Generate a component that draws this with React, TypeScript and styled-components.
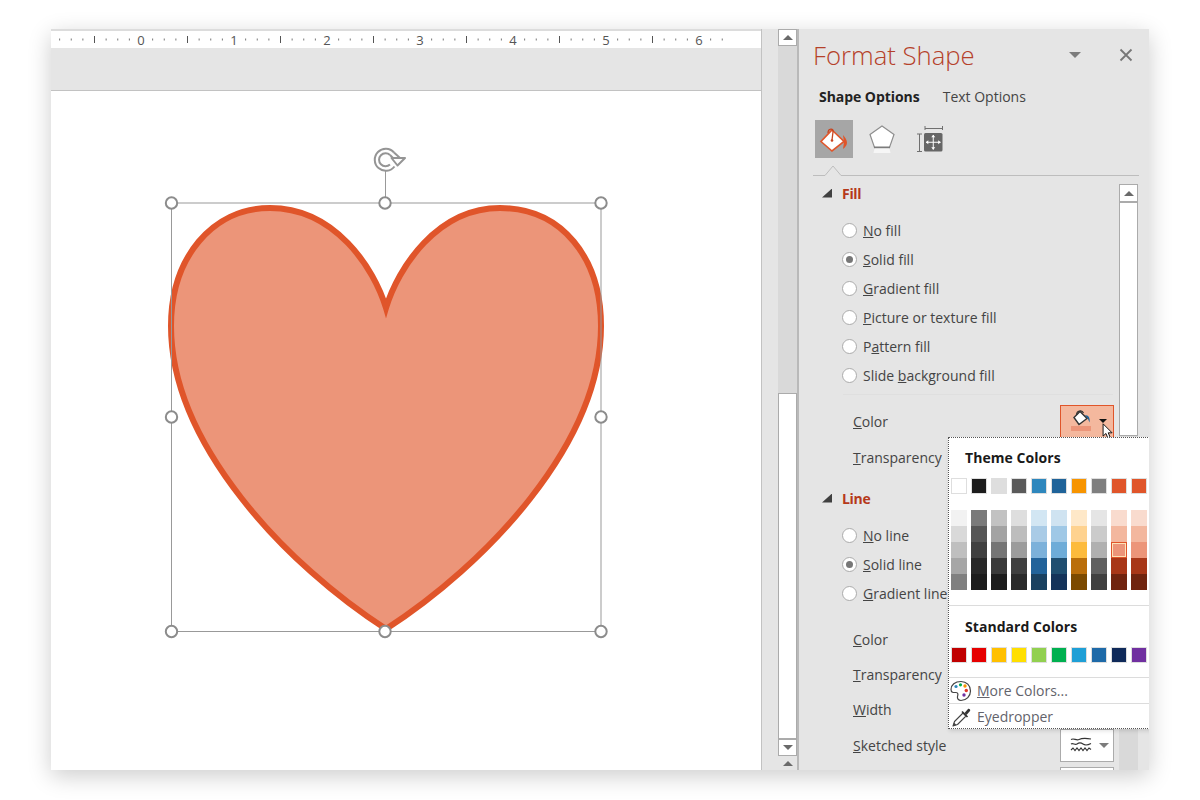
import * as React from "react";
import styled, { createGlobalStyle } from "styled-components";

const FONT = `"Open Sans", "Noto Sans", "Liberation Sans", sans-serif`;

const GlobalStyle = createGlobalStyle`
  html, body {
    margin: 0;
    padding: 0;
    background: #ffffff;
    font-family: ${FONT};
  }
`;

const Page = styled.div`
  width: 1200px;
  height: 800px;
  padding: 29px 51px 0;
  box-sizing: border-box;
  overflow: hidden;
`;

const Window = styled.div`
  position: relative;
  display: flex;
  width: 1098px;
  height: 741px;
  overflow: hidden;
  background: #e5e5e5;
  box-shadow: 0 6px 22px rgba(0, 0, 0, 0.2);
`;

const Editor = styled.div`
  display: flex;
  flex-direction: column;
  width: 710px;
`;

const Ruler = styled.svg`
  display: block;
  flex: none;
  width: 710px;
  height: 19px;
`;

const Band = styled.div`
  flex: none;
  height: 42px;
  background: #e5e5e5;
  border-bottom: 1px solid #c2c2c2;
`;

const Slide = styled.div`
  flex: 1;
  background: #ffffff;
`;

const Canvas = styled.svg`
  display: block;
  width: 710px;
  height: 679px;
`;

const Gutter = styled.div`
  flex: none;
  width: 16px;
  background: #e5e5e5;
  border-left: 1px solid #c2c2c2;
`;

const MainScroll = styled.div`
  flex: none;
  display: flex;
  flex-direction: column;
  width: 19px;
  background: #d9d9d9;
`;

const ScrollButton = styled.div`
  flex: none;
  display: flex;
  align-items: center;
  justify-content: center;
  box-sizing: border-box;
  width: 19px;
  height: ${p => p.$h || 18}px;
  background: #ffffff;
  border: 1px solid #ababab;
`;

const Up = styled.div`
  width: 0;
  height: 0;
  border-left: 5px solid transparent;
  border-right: 5px solid transparent;
  border-bottom: 5px solid #6a6a6a;
`;

const Down = styled.div`
  width: 0;
  height: 0;
  border-left: ${p => p.$s || 5}px solid transparent;
  border-right: ${p => p.$s || 5}px solid transparent;
  border-top: ${p => p.$s || 5}px solid ${p => p.$c || "#6a6a6a"};
`;

const TrackGap = styled.div`
  flex: none;
  height: ${p => p.$h}px;
`;

const Thumb = styled.div`
  flex: none;
  box-sizing: border-box;
  height: 346px;
  background: #ffffff;
  border: 1px solid #ababab;
`;

const PrevSlide = styled.div`
  flex: 1;
  display: flex;
  justify-content: center;
  padding-top: 5px;
  background: #e5e5e5;
`;

const Splitter = styled.div`
  flex: none;
  width: 2px;
  background: #b9b9b9;
`;

const Panel = styled.div`
  flex: 1;
  display: flex;
  flex-direction: column;
  min-width: 0;
  background: #e5e5e5;
`;

const PanelHeader = styled.div`
  flex: none;
  display: flex;
  align-items: center;
  box-sizing: border-box;
  height: 54px;
  padding: 0 0 2px 14px;
`;

const Title = styled.div`
  flex: 1;
  font-size: 25.7px;
  font-weight: 300;
  color: #b5412a;
  white-space: nowrap;
`;

const HeaderDrop = styled.div`
  width: 0;
  height: 0;
  margin-right: 38px;
  border-left: 6px solid transparent;
  border-right: 6px solid transparent;
  border-top: 6px solid #7c7c7c;
`;

const CloseIcon = styled.svg`
  width: 14px;
  height: 14px;
  margin-right: 16px;
`;

const Tabs = styled.div`
  flex: none;
  display: flex;
  gap: 23px;
  height: 24px;
  margin-top: 1px;
  padding-left: 20px;
  align-items: center;
`;

const Tab = styled.div`
  font-size: 14px;
  font-weight: ${p => (p.$active ? 700 : 400)};
  color: ${p => (p.$active ? "#222222" : "#444444")};
  white-space: nowrap;
  letter-spacing: ${p => (p.$active ? "-0.05px" : "0")};
`;

const IconRow = styled.div`
  flex: none;
  display: flex;
  margin-top: 12px;
  padding-left: 16px;
  gap: 10px;
`;

const IconTile = styled.div`
  width: 38px;
  height: 38px;
  background: ${p => (p.$active ? "#a6a6a6" : "transparent")};
`;

const TileIcon = styled.svg`
  display: block;
  width: 38px;
  height: 38px;
`;

const DividerIcon = styled.svg`
  display: block;
  flex: none;
  width: 350px;
  height: 18px;
`;

const PanelBody = styled.div`
  flex: 1;
  display: flex;
  min-height: 0;
  padding-left: 14px;
`;

const Content = styled.div`
  flex: none;
  width: 306px;
  padding-top: 7px;
`;

const PanelScroll = styled.div`
  flex: none;
  display: flex;
  flex-direction: column;
  width: 19px;
  margin-top: 8px;
  background: #d9d9d9;
`;

const PanelThumb = styled.div`
  flex: none;
  box-sizing: border-box;
  height: 234px;
  background: #ffffff;
  border: 1px solid #ababab;
`;

const SectionHead = styled.div`
  display: flex;
  align-items: center;
  height: 20px;
  padding-left: 9px;
  margin-top: ${p => p.$mt || 0}px;
`;

const Twisty = styled.div`
  width: 10px;
  height: 9px;
  margin-right: 10px;
  background: #404040;
  clip-path: polygon(100% 0, 100% 100%, 0 100%);
`;

const SectionTitle = styled.div`
  font-size: 14px;
  font-weight: 700;
  letter-spacing: -0.3px;
  color: #b5391a;
`;

const RadioList = styled.div`
  margin-top: ${p => p.$mt}px;
`;

const RadioRow = styled.div`
  display: flex;
  align-items: center;
  height: 29px;
  padding-left: 29px;
  font-size: 14px;
  color: #444444;
  white-space: nowrap;
`;

const RadioDot = styled.div`
  display: flex;
  align-items: center;
  justify-content: center;
  flex: none;
  box-sizing: border-box;
  width: 15px;
  height: 15px;
  margin-right: 6px;
  border-radius: 50%;
  background: #ffffff;
  border: 1px solid #ababab;
`;

const RadioMark = styled.div`
  width: 7px;
  height: 7px;
  border-radius: 50%;
  background: #777777;
`;

const Hairline = styled.div`
  height: 1px;
  margin: 4px 6px 0 30px;
  background: #dfdfdf;
`;

const PropRow = styled.div`
  display: flex;
  align-items: center;
  justify-content: space-between;
  height: ${p => p.$h || 36}px;
  margin-top: ${p => p.$mt || 0}px;
  padding: 0 5px 0 40px;
  font-size: 14px;
  color: #444444;
  white-space: nowrap;
`;

const ColorButton = styled.div`
  position: relative;
  display: flex;
  align-items: center;
  box-sizing: border-box;
  width: 54px;
  height: 33px;
  padding-left: 8px;
  gap: 6px;
  background: #f4b89e;
  border: 1px solid #e0552a;
`;

const StyleButton = styled.div`
  display: flex;
  align-items: center;
  box-sizing: border-box;
  width: 54px;
  height: 33px;
  padding-left: 9px;
  gap: 7px;
  background: #ffffff;
  border: 1px solid #ababab;
`;

const EmptyBox = styled.div`
  box-sizing: border-box;
  width: 54px;
  height: 10px;
  margin: 4px 0 0 247px;
  background: #ffffff;
  border: 1px solid #ababab;
`;

const Cursor = styled.svg`
  position: absolute;
  right: -1px;
  bottom: -4px;
  width: 12px;
  height: 18px;
`;

const Menu = styled.div`
  position: absolute;
  left: 897px;
  top: 408px;
  box-sizing: border-box;
  width: 204px;
  height: 292px;
  background: #ffffff;
  border: 1px dotted #555555;
  box-shadow: 1px 2px 4px rgba(0, 0, 0, 0.12);
`;

const MenuHeading = styled.div`
  display: flex;
  align-items: center;
  height: 20px;
  margin-top: ${p => p.$mt}px;
  padding-left: 16px;
  font-size: 14px;
  font-weight: 700;
  letter-spacing: 0.05px;
  color: #1a1a1a;
`;

const SwatchRow = styled.div`
  display: flex;
  gap: 4px;
  margin-top: ${p => p.$mt}px;
  padding-left: 2px;
`;

const Swatch = styled.div`
  flex: none;
  box-sizing: border-box;
  width: 16px;
  height: 16px;
  background: ${p => p.$c};
  border: 1px solid #dedede;
`;

const TintColumn = styled.div`
  flex: none;
  width: 16px;
  outline: 1px solid #dedede;
  outline-offset: -1px;
`;

const Tint = styled.div`
  position: relative;
  height: 16px;
  background: ${p => p.$c};
`;

const TintPick = styled.div`
  position: absolute;
  inset: 0;
  border: 1px solid #e0552a;
  box-shadow: inset 0 0 0 1px #fde3b8;
`;

const MenuRule = styled.div`
  height: 1px;
  margin-top: ${p => p.$mt || 0}px;
  background: #dcdcdc;
`;

const MenuItem = styled.div`
  display: flex;
  align-items: center;
  height: ${p => p.$h}px;
  padding-left: 1px;
  font-size: 14px;
  color: #63636b;
  white-space: nowrap;
`;

const MenuIcon = styled.svg`
  flex: none;
  width: 22px;
  height: 22px;
  margin-right: 5px;
`;

const SmallIcon = styled.svg`
  flex: none;
`;

const THEME = [
  "#ffffff", "#1c1c1c", "#dedede", "#5a5a5a", "#2e87bd",
  "#1f6399", "#f79400", "#7f7f7f", "#e0552a", "#e0552a"
];

const TINTS = [
  ["#f2f2f2", "#d9d9d9", "#bfbfbf", "#a6a6a6", "#808080"],
  ["#7a7a7a", "#565656", "#404040", "#282828", "#1c1c1c"],
  ["#c2c2c2", "#a3a3a3", "#757575", "#3a3a3a", "#1c1c1c"],
  ["#dedede", "#bdbdbd", "#9c9c9c", "#3f3f3f", "#2a2a2a"],
  ["#d2e6f3", "#a9cbe6", "#7cb1da", "#22639a", "#1a4160"],
  ["#cfe3f1", "#9fc8e6", "#6eacd8", "#1f4e70", "#14335a"],
  ["#fee8c8", "#fed28f", "#fdbb3c", "#ba6e0a", "#7c4a00"],
  ["#e5e5e5", "#cbcbcb", "#b0b0b0", "#606060", "#404040"],
  ["#f9dbce", "#f3b79e", "#ec9579", "#a83718", "#70240f"],
  ["#f9dbce", "#f3b79e", "#ec9579", "#a83718", "#70240f"]
];

const STANDARD = [
  "#c00000", "#e60000", "#ffc000", "#ffdf00", "#92d050",
  "#00b050", "#1f9fd6", "#1e6aa8", "#0f2a5a", "#7030a0"
];

const HANDLES = [
  [171.5, 203], [385, 203], [601, 203],
  [171.5, 417], [601, 417],
  [171.5, 631.5], [385, 631.5], [601, 631.5]
];

const RulerBar = () => {
  const ticks = [];
  // eighths of an inch, 0 sits at x=90 in this svg
  for (let i = -7; i <= 50; i++) {
    const x = 90 + (i * 93) / 8;
    if (i % 8 === 0) continue;
    if (i % 4 === 0) {
      ticks.push(<rect key={i} x={x - 0.5} y={7} width={1} height={7} fill="#555" />);
    } else {
      ticks.push(<rect key={i} x={x - 0.5} y={9.5} width={1} height={2} fill="#777" />);
    }
  }
  return (
    <Ruler viewBox="0 0 710 19">
      <rect width="710" height="2" fill="#dcdcdc" />
      <rect y="2" width="710" height="17" fill="#ffffff" />
      {ticks}
      {[0, 1, 2, 3, 4, 5, 6].map(n => (
        <text key={n} x={90 + n * 93} y={15.5} textAnchor="middle" fontSize="13" fontFamily={FONT} fill="#555">
          {n}
        </text>
      ))}
    </Ruler>
  );
};

const HeartCanvas = () => (
  <Canvas viewBox="51 91 710 679">
    <path
      d="M386 308 C374 268 335 208 270 208 C212 208 171 258 171 326 C171 445 288 566 386 629 C484 566 601 445 601 326 C601 258 562 208 500 208 C437 208 398 268 386 308 Z"
      fill="#ec9579"
      stroke="#e0552a"
      strokeWidth="6"
      strokeLinejoin="miter"
      strokeMiterlimit="20"
    />
    <rect x="171.5" y="203" width="429.5" height="428.5" fill="none" stroke="#999" strokeWidth="1" />
    <line x1="385.5" y1="171" x2="385.5" y2="203" stroke="#999" />
    {HANDLES.map(([x, y]) => (
      <circle key={`${x}-${y}`} cx={x} cy={y} r="5.7" fill="#fff" stroke="#8c8c8c" strokeWidth="2" />
    ))}
    <g fill="none" stroke="#959595" strokeWidth="2">
      <path d="M394 152.500 A11 11 0 1 0 394.500 166.500" />
      <path d="M390 155 A6.500 6.500 0 1 0 390 164.500" />
      <path d="M394 152.500 L400 158 M390 155 L393 158" />
    </g>
    <path d="M391.500 158 L405 158 L397.500 165.500 Z" fill="#fff" stroke="#959595" strokeWidth="2" strokeLinejoin="round" />
  </Canvas>
);

const FillTileIcon = () => (
  <TileIcon viewBox="0 0 38 38">
    <path d="M28 15 C31 18 33 22 31.500 25 C30.500 27 29 28 28 29 L29 22 Z" fill="#e0552a" />
    <path d="M17 10 L29 21.500 L17 31 L6 21.500 Z" fill="#fff" stroke="#e0552a" strokeWidth="1.600" />
    <path d="M13 13 C13 8 19 8 18 12 L17 20" fill="none" stroke="#c8441f" strokeWidth="1.300" />
    <circle cx="17" cy="20.500" r="1.300" fill="#c8441f" />
  </TileIcon>
);

const ShapeTileIcon = () => (
  <TileIcon viewBox="0 0 38 38">
    <path d="M19 6 L31 14.500 L26.500 27.500 L11.500 27.500 L7 14.500 Z" fill="#fff" stroke="#8e8e8e" strokeWidth="1.200" />
    <rect x="11" y="26.500" width="16" height="1.800" fill="#7c7c7c" />
    <path d="M11.500 28.500 L26.500 28.500 L27.500 33 L10.500 33 Z" fill="#f6f6f6" />
  </TileIcon>
);

const SizeTileIcon = () => (
  <TileIcon viewBox="-3 0 38 38">
    <g stroke="#707070" strokeWidth="1" fill="none">
      <path d="M11 6 V10 M11 8.500 H28.500 M28.500 6 V10" />
      <path d="M3 14 H8 M5.500 14 V31.500 M3 31.500 H8" />
    </g>
    <rect x="10" y="13" width="18.500" height="18.500" rx="1.500" fill="#666" />
    <g stroke="#fff" strokeWidth="1" fill="#fff">
      <path d="M12 22.250 H26.500 M19.250 15 V29.500" />
      <path d="M19.250 14.800 l-2 2.500 h4 Z M19.250 29.700 l-2 -2.500 h4 Z M11.800 22.250 l2.500 -2 v4 Z M26.700 22.250 l-2.500 -2 v4 Z" strokeWidth="0" />
    </g>
  </TileIcon>
);

const BucketIcon = () => (
  <SmallIcon width="24" height="24" viewBox="0 0 24 24">
    <path d="M5 8.500 L11 2.500 L18 9.500 L10 15.500 Z" fill="#fff" stroke="#333" strokeWidth="1.400" />
    <path d="M7.500 6 C7.500 1.500 13 0.500 14.500 4" fill="none" stroke="#333" strokeWidth="1.200" />
    <path d="M16 6.500 C19 5.500 21.500 9 20.500 13.500 L18.800 9.500 Z" fill="#1f6399" />
    <rect x="2" y="17" width="20" height="5" fill="#ec9579" />
  </SmallIcon>
);

const WaveIcon = () => (
  <SmallIcon width="22" height="16" viewBox="0 0 22 16">
    <g fill="none" stroke="#333" strokeWidth="1.100">
      <path d="M1 2.500 C4 0.500 6 4 9 2.500 S15 1 21 2" />
      <path d="M1 7 C3 5.500 5 8.500 7 7 S11 5.500 13 7 S17 8.500 21 6.500" />
      <path d="M1 13 l2 -2 l2 2.500 l2 -2.500 l2 2.500 l2 -2.500 l2 2.500 l2 -2.500 l2 2.500 l2 -2.500 l2 1.500" />
    </g>
  </SmallIcon>
);

const PaletteIcon = () => (
  <MenuIcon viewBox="0 0 22 22">
    <path
      d="M11 1.500 C5 1.500 1 5 1 9.500 C1 13 4 12.500 6 12.500 C8.500 12.500 8 15 7.500 16.500 C7 18.500 8.500 20.500 11 20.500 C16.500 20.500 20.500 16 20.500 11 C20.500 5.500 16.500 1.500 11 1.500 Z"
      fill="#fff"
      stroke="#444"
      strokeWidth="1.200"
    />
    <circle cx="6" cy="6.500" r="1.600" fill="#2e87bd" />
    <circle cx="10.500" cy="4.800" r="1.600" fill="#00b050" />
    <circle cx="15" cy="6" r="1.700" fill="#f79400" />
    <circle cx="16.300" cy="10.500" r="1.700" fill="#e0352a" />
    <circle cx="14" cy="15" r="1.700" fill="#7030a0" />
  </MenuIcon>
);

const EyedropperIcon = () => (
  <MenuIcon viewBox="0 0 22 22">
    <path d="M3 20 L4.500 15.500 L13 7 L16 10 L7.500 18.500 Z" fill="#fff" stroke="#444" strokeWidth="1.100" strokeLinejoin="round" />
    <path d="M3 20 L4 16.500 L6.500 19 Z" fill="#444" />
    <path d="M12 5.500 L17.500 11" stroke="#333" strokeWidth="1.700" fill="none" />
    <path d="M14.500 7 L18 3 C19 2 21 4 20 5 L16.500 9 Z" fill="#333" />
  </MenuIcon>
);

const ColorMenu = () => (
  <Menu>
    <MenuHeading $mt={9}>Theme Colors</MenuHeading>
    <SwatchRow $mt={11}>
      {THEME.map((c, i) => (
        <Swatch key={i} $c={c} />
      ))}
    </SwatchRow>
    <SwatchRow $mt={16}>
      {TINTS.map((col, i) => (
        <TintColumn key={i}>
          {col.map((c, j) => (
            <Tint key={j} $c={c}>
              {i === 8 && j === 2 && <TintPick />}
            </Tint>
          ))}
        </TintColumn>
      ))}
    </SwatchRow>
    <MenuRule $mt={15} />
    <MenuHeading $mt={10}>Standard Colors</MenuHeading>
    <SwatchRow $mt={11}>
      {STANDARD.map((c, i) => (
        <Swatch key={i} $c={c} />
      ))}
    </SwatchRow>
    <MenuRule $mt={14} />
    <MenuItem $h={25}>
      <PaletteIcon />
      <span>
        <u>M</u>ore Colors...
      </span>
    </MenuItem>
    <MenuRule />
    <MenuItem $h={25}>
      <EyedropperIcon />
      <span>Eyedropper</span>
    </MenuItem>
  </Menu>
);

export default function App() {
  return (
    <Page>
      <GlobalStyle />
      <Window>
        <Editor>
          <RulerBar />
          <Band />
          <Slide>
            <HeartCanvas />
          </Slide>
        </Editor>
        <Gutter />
        <MainScroll>
          <ScrollButton $h={17}>
            <Up />
          </ScrollButton>
          <TrackGap $h={347} />
          <Thumb />
          <ScrollButton $h={17}>
            <Down />
          </ScrollButton>
          <PrevSlide>
            <Up />
          </PrevSlide>
        </MainScroll>
        <Splitter />
        <Panel>
          <PanelHeader>
            <Title>Format Shape</Title>
            <HeaderDrop />
            <CloseIcon viewBox="0 0 14 14">
              <path d="M1.500 1.500 L12.500 12.500 M12.500 1.500 L1.500 12.500" stroke="#777" strokeWidth="1.800" fill="none" />
            </CloseIcon>
          </PanelHeader>
          <Tabs>
            <Tab $active>Shape Options</Tab>
            <Tab>Text Options</Tab>
          </Tabs>
          <IconRow>
            <IconTile $active>
              <FillTileIcon />
            </IconTile>
            <IconTile>
              <ShapeTileIcon />
            </IconTile>
            <IconTile>
              <SizeTileIcon />
            </IconTile>
          </IconRow>
          <DividerIcon viewBox="0 0 350 18">
            <path d="M14 17.500 H26 L34 8 L42 17.500 H340" fill="none" stroke="#bdbdbd" strokeWidth="1" />
          </DividerIcon>
          <PanelBody>
            <Content>
              <SectionHead>
                <Twisty />
                <SectionTitle>Fill</SectionTitle>
              </SectionHead>
              <RadioList $mt={13}>
                <RadioRow><RadioDot /><span><u>N</u>o fill</span></RadioRow>
                <RadioRow><RadioDot><RadioMark /></RadioDot><span><u>S</u>olid fill</span></RadioRow>
                <RadioRow><RadioDot /><span><u>G</u>radient fill</span></RadioRow>
                <RadioRow><RadioDot /><span><u>P</u>icture or texture fill</span></RadioRow>
                <RadioRow><RadioDot /><span>P<u>a</u>ttern fill</span></RadioRow>
                <RadioRow><RadioDot /><span>Slide <u>b</u>ackground fill</span></RadioRow>
              </RadioList>
              <Hairline />
              <PropRow $mt={8}>
                <span><u>C</u>olor</span>
                <ColorButton>
                  <BucketIcon />
                  <Down $c="#111" $s={4.5} />
                  <Cursor viewBox="0 0 14 22">
                    <path d="M1 1 L1 16 L4.500 12.800 L7 19 L9.800 17.800 L7.300 12 L12 12 Z" fill="#fff" stroke="#111" strokeWidth="1.200" />
                  </Cursor>
                </ColorButton>
              </PropRow>
              <PropRow>
                <span><u>T</u>ransparency</span>
              </PropRow>
              <SectionHead $mt={13}>
                <Twisty />
                <SectionTitle>Line</SectionTitle>
              </SectionHead>
              <RadioList $mt={13}>
                <RadioRow><RadioDot /><span><u>N</u>o line</span></RadioRow>
                <RadioRow><RadioDot><RadioMark /></RadioDot><span><u>S</u>olid line</span></RadioRow>
                <RadioRow><RadioDot /><span><u>G</u>radient line</span></RadioRow>
              </RadioList>
              <PropRow $mt={13}>
                <span><u>C</u>olor</span>
              </PropRow>
              <PropRow $h={34}>
                <span><u>T</u>ransparency</span>
              </PropRow>
              <PropRow>
                <span><u>W</u>idth</span>
              </PropRow>
              <PropRow>
                <span><u>S</u>ketched style</span>
                <StyleButton>
                  <WaveIcon />
                  <Down $c="#7c7c7c" />
                </StyleButton>
              </PropRow>
              <EmptyBox />
            </Content>
            <PanelScroll>
              <ScrollButton $h={18}>
                <Up />
              </ScrollButton>
              <PanelThumb />
            </PanelScroll>
          </PanelBody>
        </Panel>
        <ColorMenu />
      </Window>
    </Page>
  );
}
